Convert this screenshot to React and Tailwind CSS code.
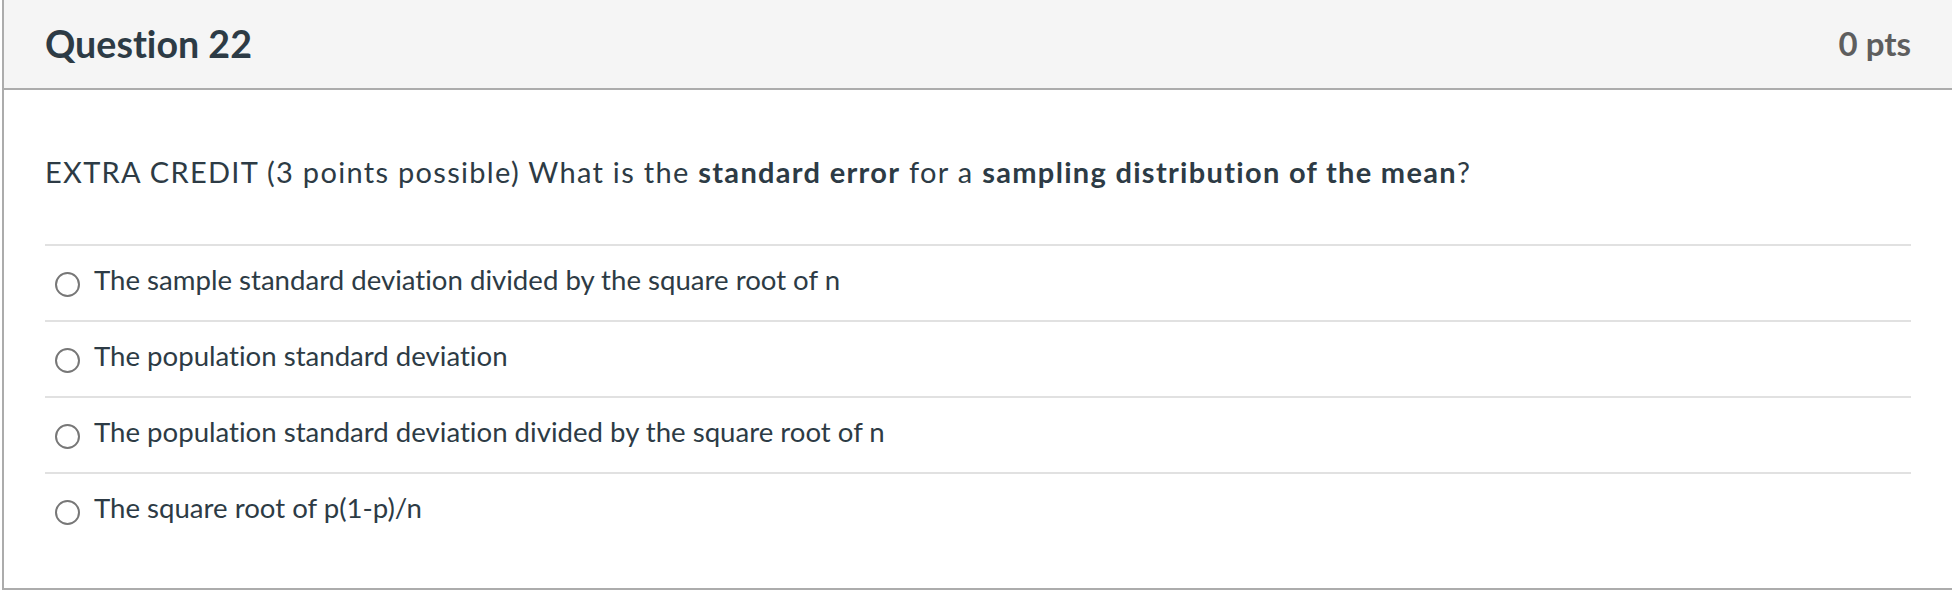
const answers = [
  'The sample standard deviation divided by the square root of n',
  'The population standard deviation',
  'The population standard deviation divided by the square root of n',
  'The square root of p(1-p)/n',
]

function AnswerRow({ text }) {
  return (
    <div>
      <div className="h-[2px] bg-[#e1e1e1]" />
      <label className="flex h-[74px] items-center">
        <span className="ml-[10px] mt-[3px] h-[25px] w-[25px] shrink-0 rounded-full border-2 border-[#777]" />
        <span className="mb-[6px] ml-[14px] text-[27.6px] leading-[36px] text-[#2d3b45]">{text}</span>
      </label>
    </div>
  )
}

export default function App() {
  return (
    <div
      className="bg-white pl-[2px] [font-variant-ligatures:none]"
      style={{ fontFamily: 'Lato, "Open Sans", sans-serif' }}
    >
      <div className="h-[590px] border-b-2 border-l-2 border-[#acacac]">
        {/* Header */}
        <div className="flex h-[90px] items-center justify-between border-b-2 border-[#acacac] bg-[#f5f5f5] px-[41px]">
          <h2 className="text-[37.6px] font-bold text-[#2d3b45]">Question 22</h2>
          <span className="text-[33px] font-bold text-[#5e5e5e]">0 pts</span>
        </div>

        {/* Body */}
        <div className="px-[41px] pt-[62px]">
          <p className="text-[29px] leading-[40px] tracking-[1.3px] text-[#2d3b45]">
            EXTRA CREDIT (3 points possible) What is the <strong>standard error</strong> for a{' '}
            <strong>sampling distribution of the mean</strong>?
          </p>
          <div className="mt-[52px]">
            {answers.map((a) => (
              <AnswerRow key={a} text={a} />
            ))}
          </div>
        </div>
      </div>
    </div>
  )
}
